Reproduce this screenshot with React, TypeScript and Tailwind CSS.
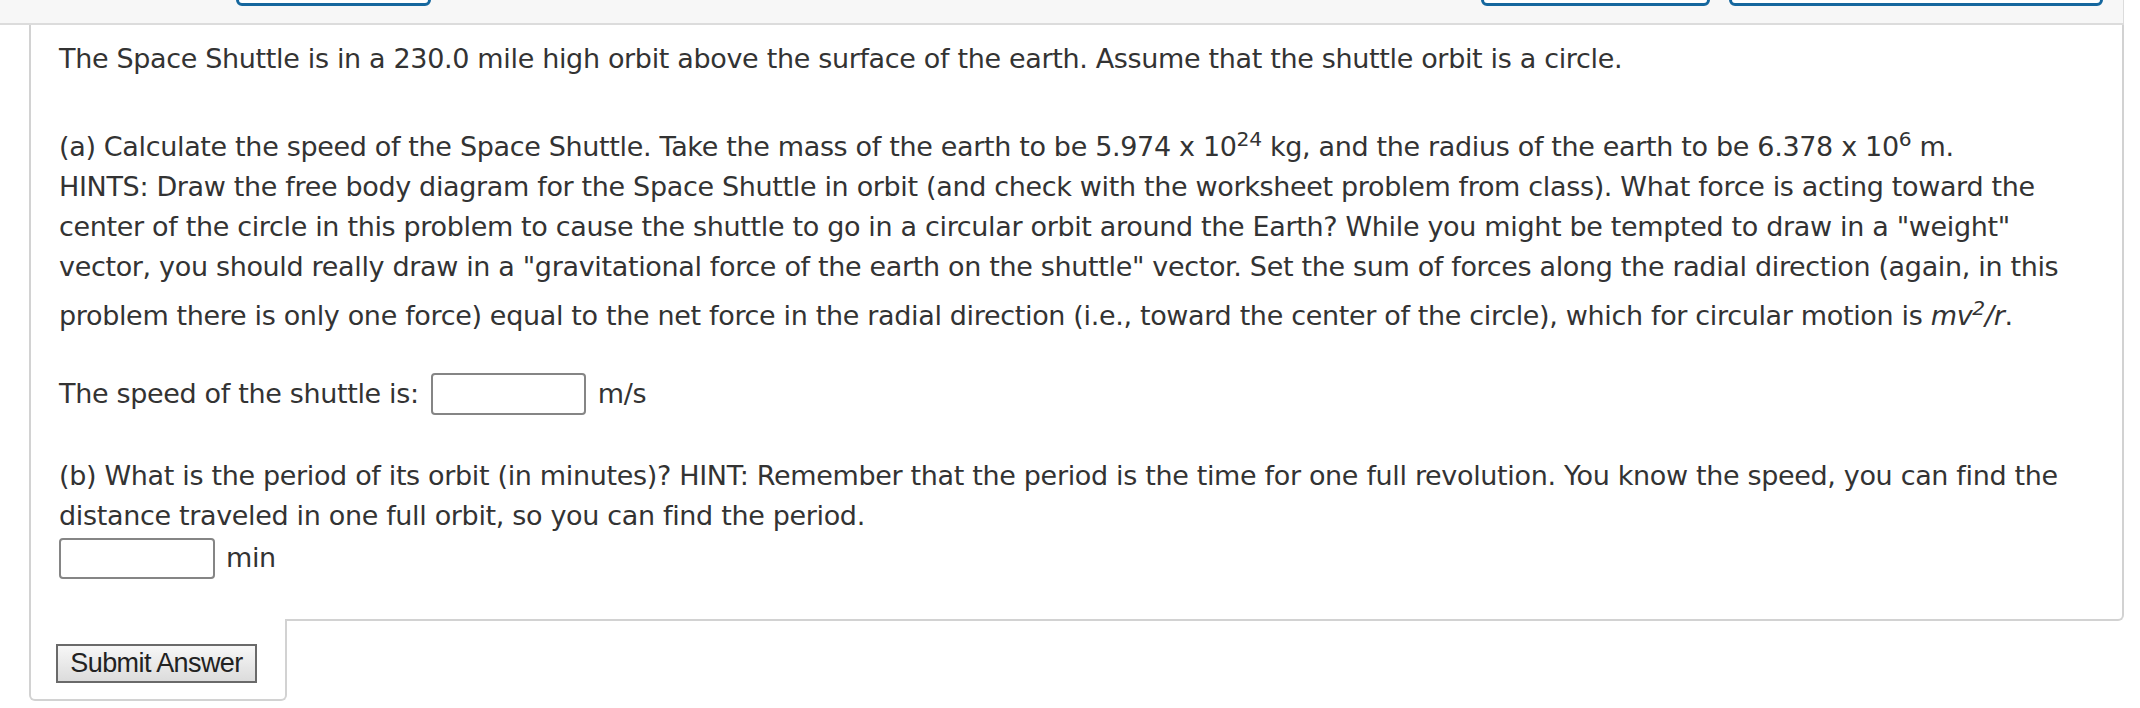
import React from "react";

export default function App() {
  return (
    <div className="w-[2140px] h-[708px] bg-white overflow-hidden text-[#333] font-['DejaVu_Sans',sans-serif]">
      <div className="w-[2124px] h-[25px] bg-[#f7f7f7] border-b-2 border-r border-[#dcdcdc] flex items-start">
        <div className="ml-[236px] w-[195px] h-[37px] -mt-[31px] shrink-0 border-[3px] border-[#15679e] rounded-[6px] bg-white" />
        <div className="ml-[1050px] w-[229px] h-[37px] -mt-[31px] shrink-0 border-[3px] border-[#15679e] rounded-[6px] bg-white" />
        <div className="ml-[19px] w-[374px] h-[37px] -mt-[31px] shrink-0 border-[3px] border-[#15679e] rounded-[6px] bg-white" />
      </div>
      <div className="ml-[29px] w-[2095px]">
        <div className="border-l-2 border-r-2 border-b-2 border-[#d2d2d2] rounded-br-[6px] pl-[28px] pr-[20px] pt-[14px] pb-[40px] text-[27px] leading-[40px] tracking-[-0.34px] whitespace-nowrap">
          <p>
            The Space Shuttle is in a 230.0 mile high orbit above the surface of the earth. Assume that the shuttle orbit is a circle.
          </p>
          <p className="mt-[48px]">
            (a) Calculate the speed of the Space Shuttle. Take the mass of the earth to be 5.974 x 10<sup>24</sup> kg, and the radius of the earth to be 6.378 x 10<sup>6</sup> m.
            <br />
            HINTS: Draw the free body diagram for the Space Shuttle in orbit (and check with the worksheet problem from class). What force is acting toward the
            <br />
            center of the circle in this problem to cause the shuttle to go in a circular orbit around the Earth? While you might be tempted to draw in a "weight"
            <br />
            vector, you should really draw in a "gravitational force of the earth on the shuttle" vector. Set the sum of forces along the radial direction (again, in this
            <br />
            <span className="inline-block pt-[9px] leading-[40px]">
              problem there is only one force) equal to the net force in the radial direction (i.e., toward the center of the circle), which for circular motion is{" "}
              <i>
                mv<sup>2</sup>/r
              </i>
              .
            </span>
          </p>
          <div className="mt-[37px] h-[42px] flex items-center">
            <span>The speed of the shuttle is:</span>
            <input type="text" className="ml-[12px] w-[155px] h-[42px] border-2 border-[#858585] rounded-[4px] bg-white outline-none" />
            <span className="ml-[12px]">m/s</span>
          </div>
          <p className="mt-[41px]">
            (b) What is the period of its orbit (in minutes)? HINT: Remember that the period is the time for one full revolution. You know the speed, you can find the
            <br />
            distance traveled in one full orbit, so you can find the period.
          </p>
          <div className="mt-[1px] h-[42px] flex items-center">
            <input type="text" className="w-[156px] h-[41px] border-2 border-[#858585] rounded-[4px] bg-white outline-none" />
            <span className="ml-[11px]">min</span>
          </div>
        </div>
        <div className="-mt-[2px] w-[258px] h-[82px] bg-white border-l-2 border-r-2 border-b-2 border-[#d2d2d2] rounded-b-[6px] pl-[25px] pt-[25px]">
          <button className="w-[201px] h-[39px] flex items-center justify-center border-2 border-[#6a6a6a] bg-gradient-to-b from-[#f7f7f7] to-[#dcdcdc] text-[27px] leading-none text-[#222] font-['Liberation_Sans',Arial,sans-serif] tracking-[-0.6px]">
            Submit Answer
          </button>
        </div>
      </div>
    </div>
  );
}
